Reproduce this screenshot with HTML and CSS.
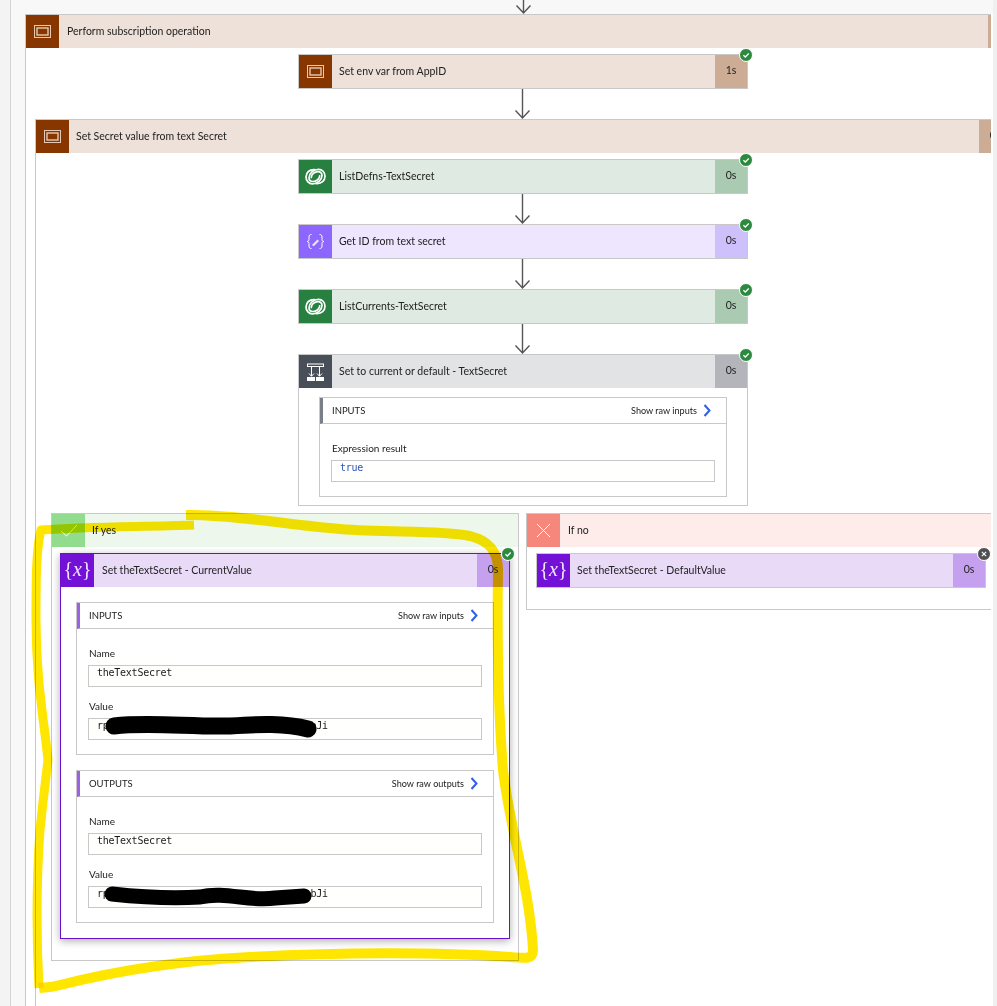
FILE: index.html
```html
<!DOCTYPE html>
<html lang="en">
<head>
<meta charset="utf-8">
<title>Flow run</title>
<link rel="stylesheet" href="styles.css">
</head>
<body>
<svg class="defs" width="0" height="0" aria-hidden="true">
  <symbol id="i-scope" viewBox="0 0 33 33">
    <rect x="8.500" y="10.500" width="16" height="12" fill="none" stroke="#e6c9b4" stroke-width="1"/>
    <rect x="11" y="13" width="11" height="7" fill="none" stroke="#e6c9b4" stroke-width="1.400"/>
  </symbol>
  <symbol id="i-dv" viewBox="0 0 33 33">
    <path d="M15.500 9.600C10.500 9.300 7 12.500 7 17c0 4 2.800 6.900 6.500 6.900 4.700 0 9.500-4 9.500-8.400 0-2.300-1.700-3.800-4-3.800-3.500 0-6.700 2.800-6.700 5.700" fill="none" stroke="#fff" stroke-width="1.700" stroke-linecap="round"/>
    <path d="M17.500 23.600c5 .3 8.500-2.900 8.500-7.400 0-4-2.800-6.900-6.500-6.900-4.700 0-9.500 4-9.500 8.400 0 2.300 1.700 3.800 4 3.800 3.500 0 6.700-2.800 6.700-5.700" fill="none" stroke="#fff" stroke-width="1.700" stroke-linecap="round"/>
  </symbol>
  <symbol id="i-json" viewBox="0 0 33 33">
    <path d="M12.500 9.500c-2 0-2.500 1-2.500 2.500v2.500c0 1.200-.7 2-2 2 1.300 0 2 .8 2 2V21c0 1.500.5 2.500 2.500 2.500M20.500 9.500c2 0 2.500 1 2.500 2.500v2.500c0 1.200.7 2 2 2-1.300 0-2 .8-2 2V21c0 1.500-.5 2.500-2.500 2.500" fill="none" stroke="#fff" stroke-width="1"/>
    <path d="M13.500 19.500l5-5 1.500 1.500-5 5h-1.500z" fill="#fff" opacity=".85"/>
  </symbol>
  <symbol id="i-compose" viewBox="0 0 33 33">
    <rect x="8.500" y="9" width="16" height="2.500" fill="none" stroke="#fff" stroke-width="1"/>
    <path d="M12.500 11.500v9.500M20.500 11.500v9.500M10 18.500l2.500 2.800 2.500-2.800M18 18.500l2.500 2.800 2.500-2.800" fill="none" stroke="#fff" stroke-width="1"/>
    <path d="M8 22h8v4H8zM17 22h8v4h-8z" fill="#fff"/>
  </symbol>
  <symbol id="i-chev" viewBox="0 0 9 13">
    <path d="M1.500 1l5 5.500-5 5.500" fill="none" stroke="#2f5fe8" stroke-width="2"/>
  </symbol>
  <symbol id="i-arrow" viewBox="0 0 30 30">
    <path d="M14.500 0v29M7.500 21.500l7 7.500 7-7.500" fill="none" stroke="#555" stroke-width="1.400"/>
  </symbol>
  <symbol id="i-ok" viewBox="0 0 14 14">
    <path d="M4 7.200l2.200 2.100L10.200 5.200" fill="none" stroke="#fff" stroke-width="1.500"/>
  </symbol>
  <symbol id="i-no" viewBox="0 0 14 14">
    <path d="M4.500 4.500l5 5M9.500 4.500l-5 5" fill="none" stroke="#fff" stroke-width="1.300"/>
  </symbol>
</svg>

<div class="page">
  <div class="rail"></div>
  <main class="main">
    <svg class="arrow-top"><use href="#i-arrow" x="0" y="-16" width="30" height="30"/></svg>
    <div class="clip-row">
      <div class="clip">
        <section class="scope scope-outer">
          <div class="head brown">
            <svg class="ico"><use href="#i-scope"/></svg>
            <span class="title">Perform subscription operation</span>
            <span class="dur"></span>
          </div>
          <div class="stack top-gap">
            <div class="card brown">
              <div class="head">
                <svg class="ico"><use href="#i-scope"/></svg>
                <span class="title">Set env var from AppID</span>
                <span class="dur">1s</span>
              </div>
              <span class="badge"><svg><use href="#i-ok"/></svg></span>
            </div>
            <svg class="arrow"><use href="#i-arrow"/></svg>
          </div>

          <section class="scope scope-inner">
            <div class="head brown">
              <svg class="ico"><use href="#i-scope"/></svg>
              <span class="title">Set Secret value from text Secret</span>
              <span class="dur">0s</span>
            </div>
            <div class="stack top-gap">
              <div class="card green">
                <div class="head">
                  <svg class="ico"><use href="#i-dv"/></svg>
                  <span class="title">ListDefns-TextSecret</span>
                  <span class="dur">0s</span>
                </div>
                <span class="badge"><svg><use href="#i-ok"/></svg></span>
              </div>
              <svg class="arrow"><use href="#i-arrow"/></svg>
              <div class="card violet">
                <div class="head">
                  <svg class="ico"><use href="#i-json"/></svg>
                  <span class="title">Get ID from text secret</span>
                  <span class="dur">0s</span>
                </div>
                <span class="badge"><svg><use href="#i-ok"/></svg></span>
              </div>
              <svg class="arrow"><use href="#i-arrow"/></svg>
              <div class="card green">
                <div class="head">
                  <svg class="ico"><use href="#i-dv"/></svg>
                  <span class="title">ListCurrents-TextSecret</span>
                  <span class="dur">0s</span>
                </div>
                <span class="badge"><svg><use href="#i-ok"/></svg></span>
              </div>
              <svg class="arrow"><use href="#i-arrow"/></svg>
              <div class="card grey">
                <div class="head">
                  <svg class="ico"><use href="#i-compose"/></svg>
                  <span class="title">Set to current or default - TextSecret</span>
                  <span class="dur">0s</span>
                </div>
                <div class="card-body compose-body">
                  <div class="panel panel-grey">
                    <div class="panel-head">
                      <span class="panel-name">INPUTS</span>
                      <span class="raw">Show raw inputs</span>
                      <svg class="chev"><use href="#i-chev"/></svg>
                    </div>
                    <div class="panel-body">
                      <div class="label">Expression result</div>
                      <div class="field literal">true</div>
                    </div>
                  </div>
                </div>
                <span class="badge"><svg><use href="#i-ok"/></svg></span>
              </div>
            </div>

            <div class="branches">
              <section class="branch branch-yes">
                <div class="branch-head yes">
                  <svg class="ico" viewBox="0 0 33 33"><path d="M9 17l5.500 5L25 11" fill="none" stroke="#fff" stroke-width="1"/></svg>
                  <span class="title">If yes</span>
                </div>
                <div class="card purple selected">
                  <div class="head">
                    <span class="ico var-ico">{<i>x</i>}</span>
                    <span class="title">Set theTextSecret - CurrentValue</span>
                    <span class="dur">0s</span>
                  </div>
                  <div class="card-body var-body">
                    <div class="panel panel-purple">
                      <div class="panel-head">
                        <span class="panel-name">INPUTS</span>
                        <span class="raw">Show raw inputs</span>
                        <svg class="chev"><use href="#i-chev"/></svg>
                      </div>
                      <div class="panel-body">
                        <div class="label">Name</div>
                        <div class="field">theTextSecret</div>
                        <div class="label label-next">Value</div>
                        <div class="field">rp<span class="spacer"></span>bJi</div>
                      </div>
                    </div>
                    <div class="panel panel-purple">
                      <div class="panel-head">
                        <span class="panel-name">OUTPUTS</span>
                        <span class="raw">Show raw outputs</span>
                        <svg class="chev"><use href="#i-chev"/></svg>
                      </div>
                      <div class="panel-body">
                        <div class="label">Name</div>
                        <div class="field">theTextSecret</div>
                        <div class="label label-next">Value</div>
                        <div class="field">rp<span class="spacer"></span>bJi</div>
                      </div>
                    </div>
                  </div>
                  <span class="badge"><svg><use href="#i-ok"/></svg></span>
                </div>
              </section>

              <section class="branch branch-no">
                <div class="branch-head no">
                  <svg class="ico" viewBox="0 0 33 33"><path d="M10 10l13 13M23 10L10 23" fill="none" stroke="#fff" stroke-width="1"/></svg>
                  <span class="title">If no</span>
                </div>
                <div class="card purple">
                  <div class="head">
                    <span class="ico var-ico">{<i>x</i>}</span>
                    <span class="title">Set theTextSecret - DefaultValue</span>
                    <span class="dur">0s</span>
                  </div>
                  <span class="badge badge-skip"><svg><use href="#i-no"/></svg></span>
                </div>
              </section>
            </div>
          </section>
        </section>
      </div>
      <div class="edge"></div>
    </div>
  </main>
  <div class="scrollbar"></div>

  <svg class="markup" viewBox="0 0 997 1006" aria-hidden="true">
    <path class="blot" stroke-width="17" d="M114 726C150 722 190 727 230 726C260 724 285 723 308 729"/>
    <path class="blot" stroke-width="15" d="M112 894C140 897 170 899 200 897C225 891 250 902 275 898L304 896"/>
    <path class="pen pen-a" d="M39 988C37 950 35 900 40 830C44 790 47 770 48 760C44 720 36 680 36 620C36 580 36 550 41 530C90 526 140 527 194 525"/>
    <path class="pen pen-b" d="M186 515C230 514 290 525 340 529C390 533 440 530 470 536C490 541 498 552 498 570C497 640 499 720 503 770C510 830 530 890 533 950C533 960 525 958 510 957C440 952 340 952 250 957C170 961 100 975 60 985C50 988 45 987 39 988"/>
  </svg>
</div>
</body>
</html>
```

FILE: styles.css
```css
* { box-sizing: border-box; }
html, body { margin: 0; padding: 0; }
body { font-family: Lato, "Open Sans", sans-serif; font-size: 10.5px; line-height: 14px; color: #222; background: #f8f8f8; }
.defs { position: absolute; }

.page { position: relative; display: flex; width: 997px; height: 1006px; overflow: hidden; background: #f8f8f8; }
.rail { width: 11px; flex: none; background: #f3f3f3; border-right: 1px solid #d4d4d4; }
.main { width: 982px; flex: none; padding-left: 14px; }
.scrollbar { flex: 1; background: #f0f0f0; }

.arrow-top { display: block; width: 30px; height: 14px; margin-left: 484px; }
.clip-row { display: flex; height: 992px; background: #fff; }
.clip { width: 966px; flex: none; overflow: hidden; }
.edge { flex: 1; }

.scope { background: #fff; border-top: 1px solid #c8c8c8; border-left: 1px solid #c8c8c8; }
.scope-outer { width: 995px; min-height: 1100px; }
.scope-inner { width: 976px; margin-left: 9px; min-height: 1000px; border-right: 1px solid #c8c8c8; }
.scope-inner > .head { margin-right: -1px; }

.head, .branch-head { display: flex; align-items: center; height: 33px; }
.ico { display: block; width: 33px; height: 33px; flex: none; }
.var-ico { color: #f2e6ff; font-family: "Liberation Serif", serif; font-size: 20px; line-height: 31px; text-align: center; }
.title { flex: 1; padding: 0 0 2px 7px; white-space: nowrap; }
.scope-outer > .head .title, .selected .title, .no .title { padding-left: 8px; }
.dur { flex: none; width: 32px; height: 33px; line-height: 31px; text-align: center; }

.brown .head, .head.brown { background: #eee1da; }
.brown .ico { background: #873600; }
.brown .dur { background: #cdac96; }
.green .head { background: #dfebe2; }
.green .ico { background: #288040; }
.green .dur { background: #aacbb2; }
.violet .head { background: #ede6fe; }
.violet .ico { background: #8c66ff; }
.violet .dur { background: #cdc0fb; }
.grey .head { background: #e2e3e5; }
.grey .ico { background: #484f58; }
.grey .dur { background: #b3b5ba; }
.purple .head { background: #e9daf8; }
.purple .ico { background: #7411d6; }
.purple .dur { background: #c5a0ef; }

.stack { display: flex; flex-direction: column; align-items: center; }
.top-gap { padding-top: 6px; }
.arrow { display: block; width: 30px; height: 30px; flex: none; }

.card { position: relative; width: 450px; flex: none; background: #fff; border: 1px solid #c8c8c8; }
.card-body { display: flex; flex-direction: column; }
.compose-body { margin: 0 -1px -1px; padding: 9px 20px 8px; border: 1px solid #c8c8c8; border-top: 0; }
.card.selected { border-color: #6b10cf; box-shadow: 0 2px 8px rgba(0, 0, 0, .32); }
.var-body { gap: 15px; padding: 15px 15px 15px; }

.badge { position: absolute; top: -7px; right: -6px; width: 14px; height: 14px; border: 1px solid #fff; border-radius: 50%; background: #2b8a3e; }
.badge svg { display: block; width: 12px; height: 12px; }
.badge-skip { background: #505050; }

.panel { border: 1px solid #c8c8c8; }
.panel-head { display: flex; align-items: center; height: 26px; padding: 0 14px 0 9px; border-bottom: 1px solid #c8c8c8; border-left: 3px solid transparent; }
.panel-grey .panel-head { border-left-color: #7a7f87; }
.panel-purple .panel-head { border-left-color: #9c60e8; }
.panel-name { flex: 1; font-size: 9.5px; }
.raw { font-size: 9.1px; }
.chev { display: block; width: 9px; height: 13px; margin-left: 6px; flex: none; }
.panel-body { padding: 0 11px 14px; }
.label { height: 16px; line-height: 16px; margin: 16px 0 4px 1px; font-size: 10px; }
.label-next { margin-top: 11px; }
.field { height: 22px; padding: 1px 8px 0; border: 1px solid #c8c8c8; background: #fffffd; font-family: "DejaVu Sans Mono", monospace; font-size: 10px; letter-spacing: -.25px; line-height: 12px; white-space: pre; color: #1a1a1a; }
.literal { color: #2f55b5; }
.spacer { display: inline-block; width: 202px; }

.branches { display: flex; gap: 7px; padding: 7px 0 0 15px; }
.branch { flex: none; background: #fff; border: 1px solid #c8c8c8; }
.branch-yes { width: 468px; height: 448px; }
.branch-no { width: 470px; height: 97px; }
.branch .card { margin: 6px 0 0 8px; }
.branch-no .card { margin-left: 9px; }
.yes { background: #edf7ec; }
.yes .ico { background: #92dc8d; }
.no { background: #fdecea; }
.no .ico { background: #f6877c; }

.markup { position: absolute; left: 0; top: 0; width: 997px; height: 1006px; pointer-events: none; }
.blot { fill: none; stroke: #000; stroke-linecap: round; stroke-linejoin: round; }
.pen { fill: none; stroke: #ffe600; stroke-linejoin: round; mix-blend-mode: multiply; }
.pen-a { stroke-width: 9; }
.pen-b { stroke-width: 10; }
```
